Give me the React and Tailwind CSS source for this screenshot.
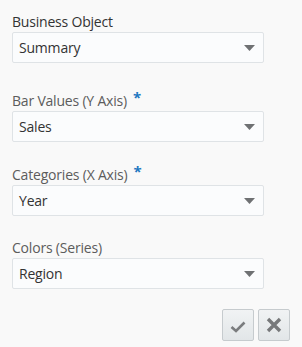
import React from "react";

const fields = [
  { label: "Business Object", value: "Summary", required: false, dark: true, top: "pt-[12px]" },
  { label: "Bar Values (Y Axis)", value: "Sales", required: true, top: "pt-[28px]" },
  { label: "Categories (X Axis)", value: "Year", required: true, top: "pt-[23px]" },
  { label: "Colors (Series)", value: "Region", required: false, top: "pt-[22px]" },
];

const Caret = () => (
  <svg width="11" height="6" viewBox="0 0 11 6" className="text-[#6f7173]">
    <path d="M0 0h11L5.5 6z" fill="currentColor" />
  </svg>
);

const Field = ({ field }) => (
  <div className={field.top}>
    <div
      className={`flex items-start h-[20px] text-[14px] leading-[20px] tracking-[-0.2px] ${
        field.dark ? "text-[#333333]" : "text-[#5c5c5c]"
      }`}
    >
      <span>{field.label}</span>
      {field.required && (
        <span className="ml-[6px] -mt-[4px] text-[#1f78c1] text-[15px] font-bold">*</span>
      )}
    </div>
    <div className="flex items-center justify-between h-[31px] w-[252px] bg-[#fbfcfd] border border-[#dfe3e6] rounded-[2px] pl-[6px] pr-[8px]">
      <span className="text-[14px] tracking-[-0.2px] text-[#333333]">{field.value}</span>
      <Caret />
    </div>
  </div>
);

export default function App() {
  return (
    <div
      className="w-[302px] h-[347px] bg-[#f9f9f9] pl-[12px] flex flex-col"
      style={{ fontFamily: '"Open Sans", "Noto Sans", sans-serif' }}
    >
      {fields.map((f) => (
        <Field key={f.label} field={f} />
      ))}
      <div className="flex justify-end gap-[4px] pr-[12px] mt-[20px]">
        <button className="w-[32px] h-[32px] flex items-center justify-center border border-[#c6cbce] rounded-[2px] bg-gradient-to-b from-[#f1f3f4] to-[#e2e6e8]">
          <svg width="16" height="12" viewBox="0 0 16 12" className="mt-[3px]">
            <path d="M1.5 6l4.5 4 8.5-8.5" fill="none" stroke="#7a7c7e" strokeWidth="2.6" />
          </svg>
        </button>
        <button className="w-[32px] h-[32px] flex items-center justify-center border border-[#c6cbce] rounded-[2px] bg-gradient-to-b from-[#f1f3f4] to-[#e2e6e8]">
          <svg width="16" height="16" viewBox="0 0 16 16">
            <path d="M2 2l12 12M14 2L2 14" fill="none" stroke="#77797b" strokeWidth="3.4" />
          </svg>
        </button>
      </div>
    </div>
  );
}
